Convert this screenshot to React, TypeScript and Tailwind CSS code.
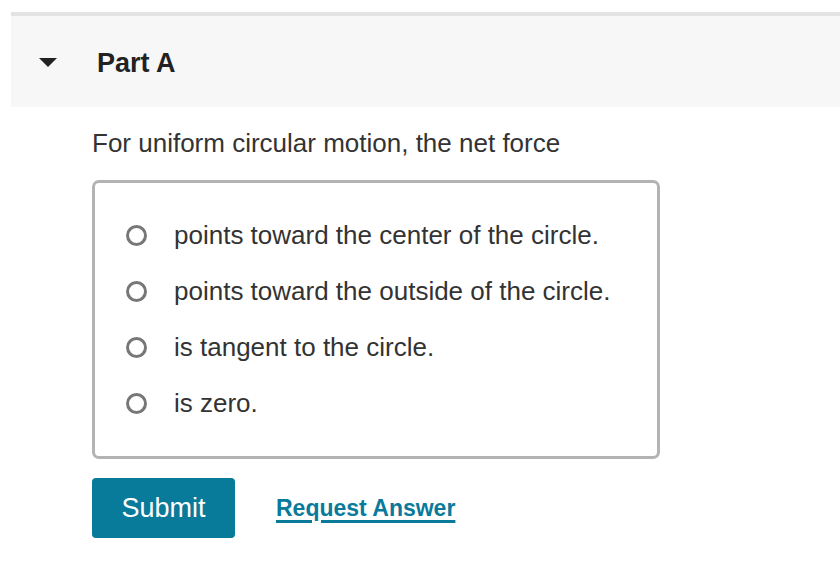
import React, { useState } from 'react';

const options = [
  'points toward the center of the circle.',
  'points toward the outside of the circle.',
  'is tangent to the circle.',
  'is zero.',
];

const App: React.FC = () => {
  const [selected, setSelected] = useState<number | null>(null);

  return (
    <div className="w-[840px] h-[566px] bg-white overflow-hidden font-['Liberation_Sans',Arial,Helvetica,sans-serif] text-[#333]">
      <div className="pt-3 pl-[11px]">
        <div className="h-[95px] border-t-4 border-[#e3e3e3] bg-[#f7f7f7] flex items-center">
          <svg width="18" height="10" viewBox="0 0 18 10" className="ml-[28px] mt-[2px]">
            <path d="M0 0 L18 0 L9 9 Z" fill="#222" />
          </svg>
          <h2 className="ml-[40px] mt-[4px] text-[27px] font-bold text-[#222] leading-none">Part A</h2>
        </div>
      </div>

      <div className="pl-[92px]">
        <p className="mt-[21px] text-[26px] leading-[30px]">For uniform circular motion, the net force</p>

        <div className="mt-[22px] w-[568px] h-[279px] border-[3px] border-[#b3b3b3] rounded-[7px] py-[24px] pl-[31px]">
          {options.map((opt, i) => (
            <label
              key={opt}
              className="h-[56px] flex items-center cursor-pointer"
              onClick={() => setSelected(i)}
            >
              <span className="w-[21px] h-[21px] rounded-full border-[3px] border-[#777] flex items-center justify-center shrink-0">
                {selected === i && <span className="w-[9px] h-[9px] rounded-full bg-[#333]" />}
              </span>
              <span className="ml-[27px] text-[26px] leading-[30px]">{opt}</span>
            </label>
          ))}
        </div>

        <div className="mt-[19px] flex items-center">
          <button className="w-[143px] h-[60px] rounded-[4px] bg-[#087a9a] text-white text-[27px] leading-none">
            Submit
          </button>
          <a
            href="#"
            className="ml-[41px] text-[23px] font-bold text-[#0a7a9a] underline decoration-[3px] underline-offset-[4px]"
          >
            Request Answer
          </a>
        </div>
      </div>
    </div>
  );
};

export default App;
